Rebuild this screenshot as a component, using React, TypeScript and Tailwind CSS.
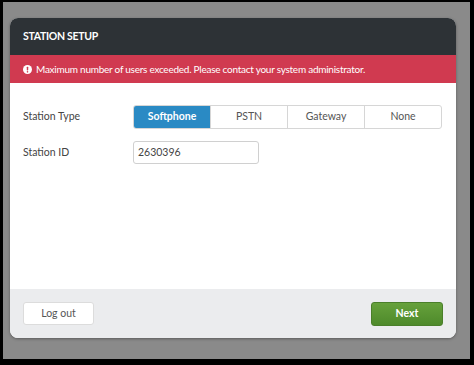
import React from "react";

export default function App() {
  const font = { fontFamily: "Lato, 'Open Sans', sans-serif" };
  const segs = ["Softphone", "PSTN", "Gateway", "None"];
  return (
    <div className="w-[474px] h-[365px] bg-black pt-[2px] pl-[3px] pr-[4px] pb-[6px] flex" style={font}>
      <div className="flex-1 bg-[#8a8a8a] pl-[7px] pt-[16px]">
        <div className="w-[446px] h-[320px] rounded-[8px] overflow-hidden flex flex-col bg-white shadow-[0_1px_3px_rgba(0,0,0,0.35)]">
          <div className="h-[37px] bg-[#2d3236] px-[13px] flex items-center">
            <span className="text-white text-[10.5px] font-bold tracking-[-0.3px]">STATION SETUP</span>
          </div>
          <div className="h-[28px] bg-[#d03a50] px-[13px] flex items-center gap-[4px]">
            <svg width="9" height="9" viewBox="0 0 10 10">
              <circle cx="5" cy="5" r="5" fill="#fff" />
              <rect x="4.2" y="2" width="1.6" height="4" rx="0.6" fill="#d03a50" />
              <circle cx="5" cy="7.6" r="0.9" fill="#d03a50" />
            </svg>
            <span className="text-white text-[10px] tracking-[-0.25px]">
              Maximum number of users exceeded. Please contact your system administrator.
            </span>
          </div>
          <div className="flex-1 px-[13px] pt-[22px] flex flex-col gap-[12px]">
            <div className="flex items-center">
              <span className="w-[110px] text-[10.5px] text-[#444]">Station Type</span>
              <div className="flex w-[309px] h-[24px] border border-[#d6d6d6] rounded-[3px] overflow-hidden">
                {segs.map((s, i) => (
                  <div
                    key={s}
                    className={
                      i === 0
                        ? "flex-1 flex items-center justify-center bg-[#2a8ac4] text-white font-bold text-[10.5px]"
                        : "flex-1 flex items-center justify-center text-[#555] text-[10.5px] border-l border-[#d6d6d6]"
                    }
                  >
                    {s}
                  </div>
                ))}
              </div>
            </div>
            <div className="flex items-center">
              <span className="w-[110px] text-[10.5px] text-[#444]">Station ID</span>
              <div className="w-[126px] h-[23px] border border-[#d0d0d0] rounded-[3px] flex items-center px-[4px] text-[10.5px] text-[#444]">
                2630396
              </div>
            </div>
          </div>
          <div className="h-[49px] bg-[#ebecee] px-[13px] flex items-center justify-between">
            <div className="w-[71px] h-[23px] bg-white border border-[#dcdcdc] rounded-[3px] flex items-center justify-center text-[10.5px] text-[#555]">
              Log out
            </div>
            <div className="w-[72px] h-[24px] rounded-[3px] bg-gradient-to-b from-[#66a13b] to-[#4e8a2b] border border-[#4a7f2a] flex items-center justify-center text-white font-bold text-[10.5px]">
              Next
            </div>
          </div>
        </div>
      </div>
    </div>
  );
}
